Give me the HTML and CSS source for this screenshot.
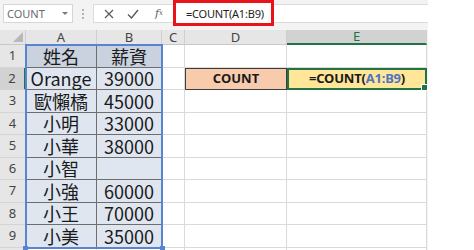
FILE: index.html
```html
<!DOCTYPE html>
<html lang="zh-Hant">
<head>
<meta charset="utf-8">
<title>COUNT</title>
<link rel="stylesheet" href="styles.css">
</head>
<body>
<div class="app">
  <div class="toolbar">
    <div class="namebox"><span class="nb-text">COUNT</span><span class="caret"></span></div>
    <div class="grip"><span></span><span></span><span></span></div>
    <div class="fbar">
      <span class="ic"><svg width="10" height="10" viewBox="0 0 10 10"><path d="M1 1L9 9M9 1L1 9" stroke="#5a5a5a" stroke-width="1.2" fill="none"/></svg></span>
      <span class="ic"><svg width="12" height="10" viewBox="0 0 12 10"><path d="M1 5.5L4.5 9L11 1" stroke="#5a5a5a" stroke-width="1.4" fill="none"/></svg></span>
      <span class="ic fx"><i>f</i><sub>x</sub></span>
      <div class="formula">=COUNT(A1:B9)</div>
    </div>
  </div>
  <div class="sheet">
    <div class="corner"><span class="tri"></span></div>
    <div class="ch">A</div>
    <div class="ch">B</div>
    <div class="ch">C</div>
    <div class="ch">D</div>
    <div class="ch ch-sel">E</div>

    <div class="table">
      <div class="t th">姓名</div><div class="t th">薪資</div>
      <div class="t">Orange</div><div class="t">39000</div>
      <div class="t">歐懶橘</div><div class="t">45000</div>
      <div class="t">小明</div><div class="t">33000</div>
      <div class="t">小華</div><div class="t">38000</div>
      <div class="t">小智</div><div class="t"></div>
      <div class="t">小強</div><div class="t">60000</div>
      <div class="t">小王</div><div class="t">70000</div>
      <div class="t">小美</div><div class="t">35000</div>
    </div>

    <div class="rh">1</div><div class="c"></div><div class="c"></div><div class="c"></div>
    <div class="rh rh-sel">2</div><div class="c"></div><div class="c label">COUNT</div><div class="c active">=COUNT(<span class="ref">A1:B9</span>)</div>
    <div class="rh">3</div><div class="c"></div><div class="c"></div><div class="c"></div>
    <div class="rh">4</div><div class="c"></div><div class="c"></div><div class="c"></div>
    <div class="rh">5</div><div class="c"></div><div class="c"></div><div class="c"></div>
    <div class="rh">6</div><div class="c"></div><div class="c"></div><div class="c"></div>
    <div class="rh">7</div><div class="c"></div><div class="c"></div><div class="c"></div>
    <div class="rh">8</div><div class="c"></div><div class="c"></div><div class="c"></div>
    <div class="rh">9</div><div class="c"></div><div class="c"></div><div class="c"></div>
    <div class="rh"></div><div class="c"></div><div class="c"></div><div class="c"></div><div class="c"></div><div class="c"></div>
  </div>
</div>
</body>
</html>
```
FILE: styles.css
```css
* { box-sizing: border-box; }
html, body { margin: 0; padding: 0; background: #ffffff; }
body { font-family: "Noto Sans", "Noto Sans CJK TC", sans-serif; overflow: hidden; }

.app { width: 428px; height: 250px; background: #f3f3f3; overflow: hidden; }

.toolbar {
  height: 30px;
  display: flex;
  align-items: flex-start;
  padding: 4px 0 0 3px;
}
.namebox {
  width: 70px;
  height: 19px;
  background: #fff;
  border: 1px solid #d6d6d6;
  display: flex;
  align-items: center;
  justify-content: space-between;
  padding: 0 4px 0 3px;
  font-family: "Noto Sans", sans-serif;
  font-size: 11px;
  line-height: 1;
  color: #6a6a6a;
}
.caret {
  width: 0; height: 0;
  border-left: 3px solid transparent;
  border-right: 3px solid transparent;
  border-top: 3px solid #7a7a7a;
}
.grip {
  width: 20px;
  height: 19px;
  display: flex;
  flex-direction: column;
  align-items: center;
  justify-content: center;
  gap: 2px;
}
.grip span { width: 2px; height: 2px; background: #b4b4b4; }
.fbar {
  flex: 1;
  height: 19px;
  background: #fff;
  border: 1px solid #dcdcdc;
  border-right: none;
  display: flex;
  align-items: flex-start;
}
.ic {
  height: 17px;
  display: flex;
  align-items: center;
  justify-content: center;
  color: #5a5a5a;
  line-height: 1;
}
.ic:nth-child(1) { width: 14px; margin-left: 8px; }
.ic:nth-child(2) { width: 14px; margin-left: 10px; }
.ic.fx {
  width: 16px; margin-left: 11px;
  font-family: "DejaVu Serif", serif;
  font-size: 11px;
}
.fx i { font-style: italic; }
.fx sub { font-size: 7px; font-style: italic; vertical-align: -2px; }
.formula {
  margin-left: 6px;
  margin-top: -5px;
  width: 101px;
  height: 26px;
  border: 3px solid #e8131b;
  background: #fff;
  display: flex;
  align-items: center;
  padding-left: 10px;
  font-family: "Noto Sans", sans-serif;
  font-size: 11px;
  line-height: 1;
  letter-spacing: -0.2px;
  color: #222;
}

.sheet {
  display: grid;
  grid-template-columns: 26px 71px 65px 23px 102px 140px;
  grid-template-rows: 15px repeat(9, 22.5px) 10px;
  background: #fff;
  width: 427px;
}
.corner {
  background: #e6e6e6;
  border-right: 1px solid #cfcfcf;
  border-bottom: 1px solid #c8c8c8;
  position: relative;
}
.tri {
  position: absolute;
  right: 2px; bottom: 2px;
  width: 0; height: 0;
  border-left: 10px solid transparent;
  border-bottom: 10px solid #b8b8b8;
}
.ch {
  background: #e6e6e6;
  border-right: 1px solid #cfcfcf;
  border-bottom: 1px solid #c8c8c8;
  display: flex;
  align-items: center;
  justify-content: center;
  font-family: "Noto Sans", sans-serif;
  font-size: 13px;
  color: #444;
  line-height: 1;
}
.ch-sel {
  background: #d2d2d2;
  color: #217346;
  border-bottom: 2px solid #217346;
}
.rh {
  background: #e6e6e6;
  border-right: 1px solid #cfcfcf;
  border-bottom: 1px solid #d4d4d4;
  display: flex;
  align-items: center;
  justify-content: center;
  font-family: "Noto Sans", sans-serif;
  font-size: 13px;
  line-height: 1;
  color: #444;
}
.rh-sel {
  background: #d2d2d2;
  border-right: 2px solid #217346;
}
.c {
  border-right: 1px solid #dadada;
  border-bottom: 1px solid #dadada;
  display: flex;
  align-items: center;
  justify-content: center;
  white-space: nowrap;
  line-height: 1;
  color: #111;
}

.table {
  grid-column: 2 / 4;
  grid-row: 2 / 11;
  display: grid;
  grid-template-columns: 71px 65px;
  grid-template-rows: repeat(9, 22.5px);
  outline: 2px solid #5b83d3;
  outline-offset: -1px;
  position: relative;
}
.table::before, .table::after {
  content: "";
  position: absolute;
  bottom: -3px;
  width: 5px; height: 5px;
  background: #5b83d3;
  z-index: 2;
}
.table::before { left: -3px; }
.table::after { right: -3px; }
.t {
  background: #dfe6f0;
  border-right: 1px solid #6e6e6e;
  border-bottom: 1px solid #6e6e6e;
  display: flex;
  align-items: center;
  justify-content: center;
  white-space: nowrap;
  font-family: "Noto Sans CJK TC", sans-serif;
  font-size: 18px;
  line-height: 1;
  color: #1a1a1a;
}
.t.th { background: #c9d2de; }

.c.label {
  background: #f8cbad;
  border: 1px solid #3d3d3d;
  font-family: "Noto Sans", sans-serif;
  font-weight: 700;
  font-size: 13px;
  color: #1a1a1a;
}
.c.active {
  background: #ffe699;
  border: 2px solid #217346;
  font-family: "Noto Sans", sans-serif;
  font-weight: 700;
  font-size: 13px;
  color: #1a1a1a;
  position: relative;
  letter-spacing: -0.2px;
}
.c.active::after {
  content: "";
  position: absolute;
  right: -3px; bottom: -3px;
  width: 5px; height: 5px;
  background: #217346;
  border: 1px solid #fff;
}
.ref { color: #4f74c0; }
```
